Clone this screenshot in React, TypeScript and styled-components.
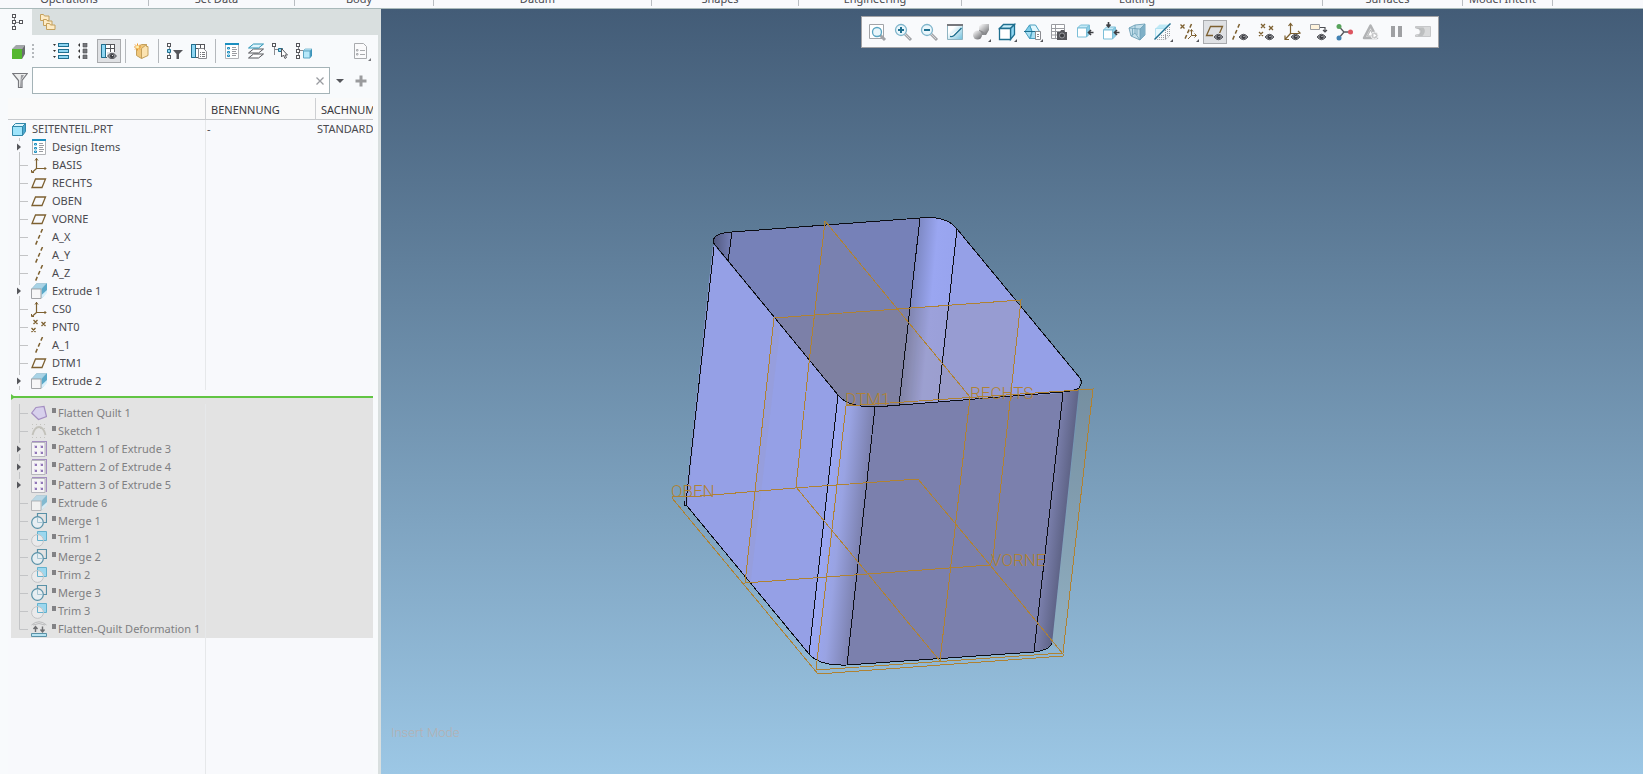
import React from "react";
import styled, { createGlobalStyle } from "styled-components";

const ink = "#4a4a4f";
const gold = "#b08232";
const brown = "#7d6030";
const teal = "#1f6f8f";
const sky = "#8fd6f2";

const GlobalStyle = createGlobalStyle`
  * { box-sizing: border-box; }
  html, body { margin: 0; height: 100%; overflow: hidden; }
  body {
    font-family: "Noto Sans", "Open Sans", sans-serif;
    font-size: 11px;
    line-height: 18px;
    color: ${ink};
    background: #f8fafc;
  }
  button, input { font: inherit; color: inherit; }
  svg { flex: none; }
`;

/* ---------- page frame ---------- */

const Page = styled.div`
  display: flex;
  flex-direction: column;
  height: 100vh;
`;

const Ribbon = styled.header`
  display: flex;
  flex: none;
  height: 9px;
  overflow: hidden;
  background: #f8f9fc;
  border-bottom: 1px solid #a9b9ba;
`;

const RibbonGroup = styled.div<{ $width: number }>`
  display: flex;
  flex: 0 0 ${(p) => p.$width}px;
  align-items: flex-end;
  justify-content: center;
  height: 6px;
  padding-right: 10px;
  border-right: 1px solid #b9bdc2;
  line-height: 14px;
  white-space: nowrap;
`;

const Workspace = styled.main`
  display: flex;
  flex: 1;
  min-height: 0;
`;

/* ---------- navigator panel ---------- */

const Navigator = styled.aside`
  display: flex;
  flex: 0 0 381px;
  flex-direction: column;
  border-right: 3px solid #d9dfdf;
  background: #f8fafc;
`;

const TabBar = styled.nav`
  display: flex;
  flex: none;
  height: 26px;
  background: #d9dfdf;
`;

const Tab = styled.button<{ $active?: boolean }>`
  display: flex;
  align-items: center;
  justify-content: center;
  width: 32px;
  padding: 0;
  border: 0;
  background: ${(p) => (p.$active ? "#f8fafc" : "transparent")};
`;

const Tools = styled.div`
  display: flex;
  flex: none;
  align-items: center;
  height: 32px;
  padding: 0 5px 0 6px;
`;

const ToolButton = styled.button<{ $pressed?: boolean }>`
  display: flex;
  flex: none;
  align-items: center;
  justify-content: center;
  width: 24px;
  height: 24px;
  padding: 0;
  border: 1px solid ${(p) => (p.$pressed ? "#a9abae" : "transparent")};
  background: ${(p) => (p.$pressed ? "#dfe1e4" : "transparent")};
`;

const Divider = styled.span`
  width: 1px;
  height: 24px;
  margin: 0 4px;
  background: #b4b8bc;
`;

const Grip = styled.span`
  width: 2px;
  height: 14px;
  margin: 0 15px 0 2px;
  background: repeating-linear-gradient(#b4b8bc 0 2px, transparent 2px 4px);
`;

const Spacer = styled.span`
  flex: 1;
`;

const FilterRow = styled.form`
  display: flex;
  flex: none;
  align-items: center;
  height: 27px;
  padding-left: 8px;
`;

const FilterBox = styled.label`
  display: flex;
  align-items: center;
  width: 298px;
  height: 27px;
  border: 1px solid #a4b3b7;
  background: #fff;
`;

const FilterInput = styled.input`
  flex: 1;
  min-width: 0;
  height: 24px;
  padding: 0 6px;
  border: 0;
  outline: 0;
  background: transparent;
`;

const SmallButton = styled.button<{ $width: number }>`
  display: flex;
  align-items: center;
  justify-content: center;
  width: ${(p) => p.$width}px;
  height: 24px;
  padding: 0;
  border: 0;
  background: transparent;
`;

const TreeArea = styled.section`
  flex: 1;
  min-height: 0;
  margin: 4px 5px 0 8px;
  overflow: hidden;
`;

const TreeTable = styled.table`
  width: 100%;
  height: 100%;
  table-layout: fixed;
  border-collapse: separate;
  border-spacing: 0;
  background: #f8f9fc;
`;

const HeadCell = styled.th<{ $width?: number }>`
  width: ${(p) => (p.$width ? `${p.$width}px` : "auto")};
  height: 22px;
  padding: 3px 0 0 5px;
  overflow: hidden;
  border-right: 1px solid #cdcfd2;
  border-bottom: 1px solid #c6c9cc;
  background: #fafafa;
  font-weight: 400;
  color: #38383c;
  text-align: left;
  white-space: nowrap;
  &:last-child { border-right: 0; }
`;

const Cell = styled.td<{ $shade?: "edge" | "full" }>`
  height: 18px;
  padding: 0 0 0 1px;
  overflow: hidden;
  white-space: nowrap;
  &:first-child { padding: 0; border-right: 1px solid #e6e8ea; }
  background: ${(p) =>
    p.$shade === "edge"
      ? "linear-gradient(to right, transparent 3px, #e3e3e3 3px)"
      : p.$shade === "full"
        ? "#e3e3e3"
        : "transparent"};
`;

const InsertCell = styled.td`
  height: 14px;
  padding: 0;
`;

const InsertBar = styled.div`
  display: flex;
  height: 14px;
  padding: 6px 0 0 3px;
`;

const InsertLine = styled.div`
  flex: 1;
  border-top: 2px solid #62c544;
  background: #e3e3e3;
`;

const InsertHandle = styled.svg`
  display: block;
  margin: -2px -4px 0 0;
  position: relative;
`;

const FillerCell = styled.td`
  padding: 0;
  &:first-child { border-right: 1px solid #e6e8ea; }
`;

const Node = styled.div<{ $muted?: boolean }>`
  display: flex;
  align-items: center;
  height: 18px;
  color: ${(p) => (p.$muted ? "#7f7f82" : ink)};
`;

const NodeIcon = styled.span<{ $muted?: boolean; $gap: number }>`
  display: flex;
  flex: none;
  margin-right: ${(p) => p.$gap}px;
  opacity: ${(p) => (p.$muted ? 0.7 : 1)};
`;

const SuppressedMark = styled.i`
  flex: none;
  align-self: flex-start;
  width: 4px;
  height: 5px;
  margin: 4px 2px 0 0;
  background: #828285;
`;

const RootNode = styled(Node)`
  padding-left: 4px;
`;

/* ---------- graphics area ---------- */

const Viewport = styled.section`
  position: relative;
  flex: 1;
  min-width: 0;
  background: linear-gradient(#435c77, #9cc7e5);
`;

const Scene = styled.svg`
  display: block;
  width: 100%;
  height: 100%;
`;

const ViewToolbar = styled.div`
  position: absolute;
  top: 7px;
  left: 480px;
  display: flex;
  gap: 2px;
  align-items: center;
  height: 32px;
  padding: 0 3px;
  border: 1px solid #a3a3a6;
  background: #f9fafc;
`;

const ModeLabel = styled.output`
  position: absolute;
  bottom: 32px;
  left: 10px;
  font-family: Roboto, sans-serif;
  font-size: 13px;
  font-weight: 300;
  line-height: 18px;
  color: #b5b0b0;
`;

/* ---------- icons ---------- */

type IconProps = { children: React.ReactNode; size?: number };

const Icon = ({ children, size = 16 }: IconProps) => (
  <svg width={size} height={size} viewBox={`0 0 ${size} ${size}`} fill="none" aria-hidden="true">
    {children}
  </svg>
);

const Eye = ({ x, y }: { x: number; y: number }) => (
  <g>
    <path d={`M${x} ${y + 3}q4.500-5.500 9 0q-4.500 5.500-9 0z`} fill="#8d8f94" stroke="#55565b" />
    <circle cx={x + 4.5} cy={y + 3} r="2" fill="#3a3b40" />
    <circle cx={x + 5} cy={y + 2.5} r=".6" fill="#fff" />
  </g>
);

const Corner = () => <path d="M20 17v3h-3z" fill="#55565b" />;

const Squares = ({ pts }: { pts: number[][] }) => (
  <>
    {pts.map(([x, y]) => (
      <rect key={`${x}-${y}`} x={x + 0.5} y={y + 0.5} width="3" height="3" fill="#fff" stroke="#55565b" />
    ))}
  </>
);

const TreeTabIcon = () => (
  <Icon>
    <path d="M6.500 2v12M7 8.500h5" stroke="#8a8b90" />
    <Squares pts={[[4, 0], [4, 6], [4, 12], [11, 6]]} />
  </Icon>
);

const FoldersIcon = () => (
  <Icon>
    {[[0, 0], [3, 5], [6, 9]].map(([x, y]) => (
      <path key={x} d={`M${x + 0.5} ${y + 0.5}h3l1 1.500h4.500v4.500h-8.500z`} fill="#fdebc6" stroke="#c4a05c" />
    ))}
  </Icon>
);

const GreenCubeIcon = () => (
  <Icon>
    <path d="M2 6l4-4h9l-3 4z" fill="#a3a6a9" />
    <path d="M12 6l3-4v9l-3 5z" fill="#6a6d70" />
    <path d="M2 6h10v10H2z" fill="#55b82f" />
  </Icon>
);

const ExpandIcon = () => (
  <Icon>
    <path d="M0 1h3l-1.500 2zM0 7h3l-1.500 2zM0 13h3l-1.500 2z" fill="#333" />
    {[0.5, 6.5, 12.5].map((y) => (
      <rect key={y} x="5.500" y={y} width="10" height="3" fill={sky} stroke={teal} />
    ))}
  </Icon>
);

const CollapseIcon = () => (
  <Icon>
    <path d="M3 0v4L1 2zM3 6v4L1 8zM3 12v4L1 14z" fill="#333" />
    <path d="M6 0h4v4H6zM6 6h4v4H6zM6 12h4v4H6z" fill="#77787d" stroke="#4c4d52" strokeWidth=".6" />
  </Icon>
);

const ColumnsBase = () => (
  <>
    <path d="M.5 1.500h13v13H.5z" fill="#fff" stroke="#55565b" />
    <path d="M9.500 1v13M5 5.500h9M1 1.500h13" stroke="#55565b" />
    <path d="M.5 1.500h4v13h-4z" fill={sky} stroke={teal} />
  </>
);

const ColumnsEyeIcon = () => (
  <Icon>
    <ColumnsBase />
    <path d="M6 9h10v7H6z" fill="#dfe1e4" />
    <Eye x={6.5} y={10} />
  </Icon>
);

const ColumnsPageIcon = () => (
  <Icon>
    <ColumnsBase />
    <path d="M7.500 5.500h5l3 3v7h-8z" fill="#fff" stroke="#8a8b90" />
    <path d="M9 9.500h1m1 0h3M9 11.500h1m1 0h3M9 13.500h1m1 0h3" stroke="#77787d" />
  </Icon>
);

const NewFolderIcon = () => (
  <Icon>
    <path d="M2.500 5.500l5-4h5v10l-5 4-5-3z" fill="#efc77c" stroke="#c4a05c" />
    <path d="M7.500 5.500l5-4v2h1.500v9l-6.500 3z" fill="#fbe3b1" stroke="#c4a05c" />
    <path d="M3.500.5v7M0 4h7M1 1.500l5 5M6 1.500l-5 5" stroke="#f09a2a" />
    <circle cx="3.500" cy="4" r="1.500" fill="#fff3b0" />
  </Icon>
);

const TreeFilterIcon = () => (
  <Icon>
    <path d="M2.500 3v11" stroke="#8a8b90" />
    <Squares pts={[[0, 0], [0, 12]]} />
    <path d="M.5 6.500h3v3h-3z" fill={sky} stroke={teal} />
    <path d="M6 7h10l-4 4V16h-2.500v-5z" fill="#55565b" />
  </Icon>
);

const ListPageIcon = () => (
  <Icon>
    <path d="M1.500 1.500h13v14h-13z" fill="#fff" stroke="#b1b3b7" />
    <path d="M1 1h14" stroke="#1b8fc0" strokeWidth="2" />
    <path d="M3.500 4.500h2v1.500h-2zM3.500 8.500h2v1.500h-2zM3.500 12h2v1.500h-2z" stroke="#1b8fc0" />
    <path d="M8 4.500h4M8 6.500h5M8 8.500h4M8 10.500h5M8 12.500h4" stroke="#9a9ca1" />
  </Icon>
);

const LayersIcon = () => (
  <Icon>
    <path d="M.5 15l5-4h10l-5 4z" fill="#fff" stroke="#55565b" />
    <path d="M.5 10l5-4h10l-5 4z" fill="#fff" stroke="#55565b" />
    <path d="M.5 5l5-4h10l-5 4z" fill="#e2f6fd" stroke="#2a93b5" />
  </Icon>
);

const TreeCursorIcon = () => (
  <Icon>
    <path d="M2.500 4v8M3 6.500h4" stroke="#8a8b90" />
    <Squares pts={[[0, 0]]} />
    <path d="M6.500 5.500h4v3h-4z" fill={sky} stroke={teal} />
    <path d="M9.500 5.500v8.500l2-2 1.500 3.500 1.500-1-1.500-2.500h2.500z" fill="#fff" stroke="#55565b" />
  </Icon>
);

const TreeBoxIcon = () => (
  <Icon>
    <path d="M2.500 3v11M4 7.500h3" stroke="#8a8b90" />
    <Squares pts={[[0, 0], [0, 6], [0, 12]]} />
    <path d="M7 8l2-2h7l-2 2z" fill="#c9eefa" stroke="#5ba6c4" strokeWidth=".7" />
    <path d="M14 8l2-2v7l-2 2z" fill="#3a93ba" />
    <path d="M7.500 8h6.500v7H7.500z" fill="#b6e8fa" stroke="#5ba6c4" />
  </Icon>
);

const SheetIcon = () => (
  <Icon size={20}>
    <path d="M3.500 2.500h9l3 3v12h-12z" fill="#fbfbfc" stroke="#a9abae" />
    <path d="M5.500 8.500h1.500v1.500h-1.500zM5.500 12.500h1.500v1.500h-1.500z" stroke="#a9abae" />
    <path d="M9 9.500h5M9 13.500h5" stroke="#a9abae" />
    <path d="M20 17v3h-3z" fill="#77787d" />
  </Icon>
);

const FunnelIcon = () => (
  <Icon>
    <path d="M.7.500h14.600L10 7.500v7H6.500v-7z" fill="#eceded" stroke="#77787d" strokeWidth="1.200" />
    <path d="M9 2h3L9.500 6.500V14H8z" fill="#9a9ca1" />
  </Icon>
);

/* model tree icons */

const PartIcon = () => (
  <Icon size={14}>
    <path d="M.5 4.500l3-3h10l-3 3z" fill="#d9f5fd" stroke="#3388aa" />
    <path d="M10.500 4.500l3-3v8l-3 4z" fill="#4aa7cf" stroke="#3388aa" />
    <path d="M.5 4.500h10v9H.5z" fill="#9fe4fb" stroke="#3388aa" />
  </Icon>
);

const CsysIcon = () => (
  <Icon>
    <path d="M5.500 1v10.500H15M5.500 11.500L1 15.500" stroke={brown} strokeWidth="1.200" />
    <path d="M4 3.500l1.500-2 1.500 2M13.500 10l1.500 1.500-1.500 1.500M.5 13v2.500H3" stroke={brown} />
  </Icon>
);

const PlaneIcon = () => (
  <Icon>
    <path d="M4.500 4h10l-3.500 8.500H1z" stroke={brown} strokeWidth="1.300" />
  </Icon>
);

const AxisIcon = () => (
  <Icon>
    <path d="M11.500 0L4.500 16" stroke={brown} strokeWidth="1.500" strokeDasharray="4 2.500" />
  </Icon>
);

const crosses = (pts: number[][]) =>
  pts.map(([x, y]) => `M${x} ${y}l4 4M${x + 4} ${y}l-4 4`).join("");

const PointIcon = () => (
  <Icon>
    <path d={crosses([[2.5, 1], [10.5, 3], [0.5, 9]])} stroke={brown} strokeWidth="1.300" />
  </Icon>
);

const ExtrudeIcon = () => (
  <Icon>
    <path d="M.5 6l5-5.500h10L10.500 6z" fill="#a9d3e6" stroke="#8fb9cb" strokeWidth=".6" />
    <path d="M10.500 6l5.500-6v9l-5.500 6.500z" fill="#5ba9c9" />
    <path d="M10.500 12l5.500-5v3l-5.500 5.500z" fill="#d6effa" />
    <path d="M.5 6h9.500v9.500H.5z" fill="#f7f7f8" stroke="#a2a4a8" />
  </Icon>
);

const FlattenQuiltIcon = () => (
  <Icon>
    <path d="M5 2.500l8-1 2.500 10-8 3L.7 8z" fill="#d3c9f0" stroke="#8a6bb4" strokeWidth="1.200" />
  </Icon>
);

const SketchIcon = () => (
  <Icon>
    <path d="M1 1.500h14M1 5.500h14M1 14.500h14" stroke="#b7b7b0" strokeDasharray="1 3" />
    <path d="M1.500 12q2-8 6.500-8t6.500 8" stroke="#b5b4a9" strokeWidth="1.800" />
  </Icon>
);

const PatternIcon = () => (
  <Icon>
    <path d="M.5 1.500h13.500v14H.5z" fill="#fdfcfe" stroke="#a5a5ad" />
    <path d="M1 .5h14.500V15" stroke="#8a6bb4" strokeWidth="1.200" />
    <path d="M3 4h3v3H3zM9 4h3v3H9zM3 10h3v3H3zM9 10h3v3H9z" fill="#d8ccea" />
    <path d="M4 5h2v2H4zM10 5h2v2h-2zM4 11h2v2H4zM10 11h2v2h-2z" fill="#6f4aa6" />
  </Icon>
);

const MergeIcon = () => (
  <Icon>
    <path d="M6.500.5h9v9h-9z" stroke={teal} strokeWidth="1.200" />
    <circle cx="6.500" cy="9.500" r="5.800" fill="#e9f4f9" stroke={teal} strokeWidth="1.200" />
    <path d="M6.500 4v5.500H12" stroke="#8fb9cb" />
  </Icon>
);

const TrimIcon = () => (
  <Icon>
    <path d="M6.500.5h9v9h-9z" fill="#7fd3f3" stroke="#2f9cc4" />
    <circle cx="6.500" cy="9.500" r="5.900" fill="#eeeeef" stroke="#b5b7ba" />
    <path d="M6.500 4v5.500H12" stroke="#2f9cc4" />
  </Icon>
);

const DeformIcon = () => (
  <Icon>
    <path d="M.5 4q7.500-6.500 15 0M2 4q6-3 12 0" stroke="#a9aaac" />
    <path d="M4.500 11V6M2.500 8l2-2.500 2 2.500M11.500 5.500v5M9.500 8.500l2 2.500 2-2.500" stroke="#3d3e42" strokeWidth="1.400" />
    <path d="M.5 12.500h15v3H.5z" fill="#a6e4f7" stroke={teal} />
  </Icon>
);

/* view toolbar icons */

const Lens = ({ sign }: { sign: string }) => (
  <>
    <path d="M12 12l6 6" stroke="#a2a4a8" strokeWidth="3" />
    <path d="M12 12l5 5" stroke="#d6d7d9" />
    <circle cx="8" cy="8" r="5.500" fill="#eaf6fb" stroke="#7fb5cb" strokeWidth="1.300" />
    <path d={sign} stroke={teal} strokeWidth="2" />
  </>
);

const RefitIcon = () => (
  <Icon size={20}>
    <path d="M2.500 2.500h14v14h-14z" fill="#fff" stroke="#a2a4a8" />
    <path d="M13 13l5 5" stroke="#a2a4a8" strokeWidth="3" />
    <circle cx="10" cy="10" r="4.500" fill="#eaf6fb" stroke="#5aa5c2" strokeWidth="1.300" />
  </Icon>
);
const ZoomInIcon = () => <Icon size={20}><Lens sign="M5 8h6M8 5v6" /></Icon>;
const ZoomOutIcon = () => <Icon size={20}><Lens sign="M5 8h6" /></Icon>;

const RepaintIcon = () => (
  <Icon size={20}>
    <defs>
      <linearGradient id="repaint" x1="0" y1="0" x2="1" y2="1">
        <stop offset=".3" stopColor="#fff" />
        <stop offset="1" stopColor="#6fbfdc" />
      </linearGradient>
    </defs>
    <path d="M2.500 2.500h15v15h-15z" fill="url(#repaint)" stroke="#8fb4c2" />
    <path d="M2 3h16" stroke="#77787d" strokeWidth="2" />
    <path d="M16.500 5.500L8 14l-4 2.500 2.500-4z" fill="#fff" />
    <path d="M16.500 6L9 13.500q-2 1.500-4 1" stroke={teal} strokeWidth="1.400" />
  </Icon>
);

const ShadeIcon = () => (
  <Icon size={20}>
    <defs>
      <linearGradient id="shade" x1="0" y1="0" x2=".8" y2="1">
        <stop offset=".1" stopColor="#f4f4f5" />
        <stop offset="1" stopColor="#707174" />
      </linearGradient>
    </defs>
    <path d="M8 4l3-2h7v6l-3 5H8z" fill="url(#shade)" />
    <path d="M8 8q5 1 7 5h-7z" fill="#8b8c8f" />
    <circle cx="6.500" cy="13" r="4.500" fill="url(#shade)" />
    <Corner />
  </Icon>
);

const BoxStyleIcon = () => (
  <Icon size={20}>
    <path d="M2.500 6.500l4-4h11l-4 4z" fill="#c9eefa" stroke={teal} strokeWidth="1.300" />
    <path d="M13.500 6.500l4-4v10l-4 5z" fill={sky} stroke={teal} strokeWidth="1.300" />
    <path d="M2.500 6.500h11v11h-11z" fill="#fff" stroke={teal} strokeWidth="1.300" />
    <Corner />
  </Icon>
);

const SavedViewIcon = () => (
  <Icon size={20}>
    <path d="M6.500 3h6l4 6.500H9z" fill="#e2f7fd" stroke="#4aa0c0" />
    <path d="M2 9.500L6.500 3 9 9.500z" fill="#7fcdea" stroke="#4aa0c0" />
    <path d="M2 9.500h7l-1.500 7h-1zM9 9.500h7.500l-4 7h-6z" fill="#a9e0f4" stroke="#4aa0c0" />
    <path d="M1 9.500h16" stroke={teal} />
    <path d="M12.500 9.500h5v8h-5z" fill="#fff" stroke="#8a8b90" />
    <path d="M14 12.500h2M14 14.500h2" stroke="#8a8b90" />
    <Corner />
  </Icon>
);

const CameraIcon = () => (
  <Icon size={20}>
    <path d="M2.500 2.500h13v14h-13zM6.500 2v14M2 6.500h13M2 9.500h13M2 13h13" fill="#fff" stroke="#9a9ca1" />
    <path d="M8 10h3l1-2h3l1 2h2v8H8z" fill="#55565b" />
    <circle cx="13" cy="13.500" r="2.500" fill="#3d3e42" stroke="#9a9ca1" />
  </Icon>
);

const PaleBox = ({ y }: { y: number }) => (
  <g>
    <path d={`M2.500 ${y + 3}l3-3h9l-3 3z`} fill="#c5eaf7" stroke="#7cbfd8" />
    <path d={`M11.500 ${y + 3}l3-3v9l-3 3z`} fill="#8ccde6" stroke="#7cbfd8" />
    <path d={`M2.500 ${y + 3}h9v9h-9z`} fill="#fff" stroke="#7cbfd8" />
  </g>
);

const ViewNormalIcon = () => (
  <Icon size={20}>
    <PaleBox y={3} />
    <path d="M18.500 10.500H14M16 8l-2.500 2.500L16 13" stroke="#3d3e42" strokeWidth="1.600" />
  </Icon>
);

const ViewOrientIcon = () => (
  <Icon size={20}>
    <PaleBox y={5} />
    <path d="M18.500 10.500H14M16 8l-2.500 2.500L16 13M7.500 0v4.500M5.500 2.500l2 2.500 2-2.500" stroke="#3d3e42" strokeWidth="1.600" />
  </Icon>
);

const PerspectiveIcon = () => (
  <Icon size={20}>
    <path d="M2 6l6-3 10-1v11l-5 5-9-4z" fill="#c4dfeb" stroke="#7aa9be" />
    <path d="M13 7l5-5v11l-5 5z" fill="#7fb0c7" />
    <path d="M2 6l11 1 5-5M13 7v11M8 3v8l5 7M8 11l-4 3M5.500 6.500v7M10 7v6" stroke="#6a9fb6" strokeWidth=".8" />
  </Icon>
);

const SectionIcon = () => (
  <Icon size={20}>
    <path d="M2.500 6.500l4-4h10L12 7z" fill="#bfe9f6" />
    <path d="M2.500 6.500h9.500L2.500 17z" fill="#e8f8fd" stroke="#a5dcef" strokeWidth=".8" />
    <path d="M16.500 5v9l-4 3.500H4M12.500 8v9M8 13.500h5M6 15.500h7M14.500 7v8" stroke="#9a9ca1" strokeDasharray="1 1" />
    <path d="M17.500 1.500l-16 16" stroke={teal} strokeWidth="1.500" />
    <Corner />
  </Icon>
);

const DatumFiltersIcon = () => (
  <Icon size={20}>
    <path d={crosses([[1.5, 2.5]])} stroke={brown} strokeWidth="1.300" />
    <path d="M12.500 2l-7 16" stroke={brown} strokeWidth="1.500" strokeDasharray="4 2" />
    <path d="M12.500 8v5.500H17M12.500 13.500L9 17M11 9.500l1.500-2 1.500 2M15.500 11.500l2 2-2 2" stroke={brown} />
    <Corner />
  </Icon>
);

const PlaneEyeIcon = () => (
  <Icon size={20}>
    <path d="M5.500 4.500h12l-4 9H1.500z" stroke={brown} strokeWidth="1.300" />
    <path d="M8 11h11v7H8z" fill="#dfe1e4" />
    <Eye x={9} y={12} />
  </Icon>
);

const AxisEyeIcon = () => (
  <Icon size={20}>
    <path d="M8.500 2l-7 16" stroke={brown} strokeWidth="1.500" strokeDasharray="4 2.500" />
    <Eye x={8} y={12} />
  </Icon>
);

const PointEyeIcon = () => (
  <Icon size={20}>
    <path d={crosses([[4, 2], [12, 4], [2, 10]])} stroke={brown} strokeWidth="1.300" />
    <Eye x={8} y={12} />
  </Icon>
);

const CsysEyeIcon = () => (
  <Icon size={20}>
    <path d="M7.500 2v9.500h9M7.500 11.500L2.500 17M5.500 4l2-2.500 2 2.500M15 9l2.500 2.500M2 13.500v4h4" stroke={brown} strokeWidth="1.200" />
    <Eye x={8} y={12} />
  </Icon>
);

const NoteEyeIcon = () => (
  <Icon size={20}>
    <path d="M1.500 2.500h9v5h-9z" fill="#fff3dc" stroke="#9a9ca1" />
    <path d="M11 5.500h5v4M14 8l2 2 2-2" stroke="#4c4d52" strokeWidth="1.200" />
    <Eye x={8} y={12} />
  </Icon>
);

const NetworkIcon = () => (
  <Icon size={20}>
    <path d="M4 4.500l5 5.500-5 6M9 10h7" stroke="#55565b" strokeWidth="1.300" />
    <circle cx="4" cy="4.500" r="2.500" fill="#58a35c" />
    <circle cx="4" cy="16" r="2.500" fill="#4382b3" />
    <circle cx="15.500" cy="10" r="2.500" fill="#dd5560" />
  </Icon>
);

const SimulateIcon = () => (
  <Icon size={20}>
    <path d="M9.500 3.500L16 16H3z" fill="#e4e4e5" stroke="#b2b3b5" strokeWidth="2.500" strokeLinejoin="round" />
    <path d="M9.500 8l3 6h-6z" fill="#fff" stroke="#b2b3b5" />
    <circle cx="13.500" cy="13.500" r="3.500" fill="#c4c5c7" stroke="#f1f1f2" />
    <path d="M12.500 11.500l3 2-3 2z" fill="#fff" />
  </Icon>
);

const PauseIcon = () => (
  <Icon size={20}>
    <path d="M4 4h4v11H4zM11 4h4v11h-4z" fill="#9fa0a3" />
  </Icon>
);

const ShapeIcon = () => (
  <Icon size={20}>
    <path d="M2.500 4.500h15v10h-15v-1.500q6-.5 6-3.500t-6-3.500z" fill="#d8d9da" stroke="#c6c7c9" />
    <path d="M2.500 5.500h8q3 4-1 8.500h-5q6-5-2-8.500z" fill="#b2b3b5" opacity=".7" />
  </Icon>
);

/* ---------- data ---------- */

const ribbonGroups: [string, number][] = [
  ["Operations", 149], ["Set Data", 146], ["Body", 139], ["Datum", 218], ["Shapes", 147],
  ["Engineering", 163], ["Editing", 361], ["Surfaces", 140], ["Model Intent", 90],
];

type Item = { label: string; icon: React.ComponentType; expandable?: boolean };

const activeItems: Item[] = [
  { label: "Design Items", icon: ListPageIcon, expandable: true },
  { label: "BASIS", icon: CsysIcon },
  { label: "RECHTS", icon: PlaneIcon },
  { label: "OBEN", icon: PlaneIcon },
  { label: "VORNE", icon: PlaneIcon },
  { label: "A_X", icon: AxisIcon },
  { label: "A_Y", icon: AxisIcon },
  { label: "A_Z", icon: AxisIcon },
  { label: "Extrude 1", icon: ExtrudeIcon, expandable: true },
  { label: "CS0", icon: CsysIcon },
  { label: "PNT0", icon: PointIcon },
  { label: "A_1", icon: AxisIcon },
  { label: "DTM1", icon: PlaneIcon },
  { label: "Extrude 2", icon: ExtrudeIcon, expandable: true },
];

const suppressedItems: Item[] = [
  { label: "Flatten Quilt 1", icon: FlattenQuiltIcon },
  { label: "Sketch 1", icon: SketchIcon },
  { label: "Pattern 1 of Extrude 3", icon: PatternIcon, expandable: true },
  { label: "Pattern 2 of Extrude 4", icon: PatternIcon, expandable: true },
  { label: "Pattern 3 of Extrude 5", icon: PatternIcon, expandable: true },
  { label: "Extrude 6", icon: ExtrudeIcon },
  { label: "Merge 1", icon: MergeIcon },
  { label: "Trim 1", icon: TrimIcon },
  { label: "Merge 2", icon: MergeIcon },
  { label: "Trim 2", icon: TrimIcon },
  { label: "Merge 3", icon: MergeIcon },
  { label: "Trim 3", icon: TrimIcon },
  { label: "Flatten-Quilt Deformation 1", icon: DeformIcon },
];

const viewTools: [string, React.ComponentType][] = [
  ["Refit", RefitIcon], ["Zoom In", ZoomInIcon], ["Zoom Out", ZoomOutIcon], ["Repaint", RepaintIcon],
  ["Rendering Options", ShadeIcon], ["Display Style", BoxStyleIcon], ["Saved Orientations", SavedViewIcon],
  ["View Manager", CameraIcon], ["View Normal", ViewNormalIcon], ["Reorient", ViewOrientIcon],
  ["Perspective", PerspectiveIcon], ["Section", SectionIcon], ["Datum Display Filters", DatumFiltersIcon],
  ["Plane Display", PlaneEyeIcon], ["Axis Display", AxisEyeIcon], ["Point Display", PointEyeIcon],
  ["Csys Display", CsysEyeIcon], ["Annotation Display", NoteEyeIcon], ["Spin Center", NetworkIcon],
  ["Simulate", SimulateIcon], ["Pause", PauseIcon], ["Surface Analysis", ShapeIcon],
];

/* ---------- tree ---------- */

const Branch = ({ expandable, last }: { expandable?: boolean; last?: boolean }) => (
  <svg width="23" height="18" viewBox="0 0 23 18" aria-hidden="true">
    <path
      d={expandable ? "M11.500 0v3M11.500 14v4" : last ? "M11.500 0v9.500H20" : "M11.500 0v18M11.500 9.500H20"}
      stroke="#c3c4c6"
      fill="none"
    />
    {expandable && <path d="M9 5.500v7l4-3.500z" fill="#55565b" />}
  </svg>
);

const TreeRow = ({ item, muted, last }: { item: Item; muted?: boolean; last?: boolean }) => {
  const Glyph = item.icon;
  return (
    <tr>
      <Cell $shade={muted ? "edge" : undefined}>
        <Node $muted={muted}>
          <Branch expandable={item.expandable} last={last} />
          <NodeIcon $muted={muted} $gap={5}><Glyph /></NodeIcon>
          {muted && <SuppressedMark />}
          {item.label}
        </Node>
      </Cell>
      <Cell $shade={muted ? "full" : undefined} />
      <Cell $shade={muted ? "full" : undefined} />
    </tr>
  );
};

const ModelTree = () => (
  <TreeArea>
    <TreeTable aria-label="Model tree">
      <thead>
        <tr>
          <HeadCell $width={198} aria-label="Feature" />
          <HeadCell $width={110}>BENENNUNG</HeadCell>
          <HeadCell>SACHNUMMER</HeadCell>
        </tr>
      </thead>
      <tbody>
        <tr>
          <Cell>
            <RootNode>
              <NodeIcon $gap={6}><PartIcon /></NodeIcon>
              SEITENTEIL.PRT
            </RootNode>
          </Cell>
          <Cell>-</Cell>
          <Cell>STANDARD_</Cell>
        </tr>
        {activeItems.map((item) => <TreeRow key={item.label} item={item} />)}
        <tr>
          <InsertCell colSpan={3}>
            <InsertBar>
              <InsertHandle width="4" height="6" viewBox="0 0 4 6" aria-hidden="true">
                <path d="M0 0l4 3-4 3z" fill="#62c544" />
              </InsertHandle>
              <InsertLine />
            </InsertBar>
          </InsertCell>
        </tr>
        {suppressedItems.map((item, i) => (
          <TreeRow key={item.label} item={item} muted last={i === suppressedItems.length - 1} />
        ))}
        <tr>
          <FillerCell />
          <FillerCell />
          <FillerCell />
        </tr>
      </tbody>
    </TreeTable>
  </TreeArea>
);

const Tool = ({ label, pressed, children }: { label: string; pressed?: boolean; children: React.ReactNode }) => (
  <ToolButton type="button" aria-label={label} aria-pressed={pressed} $pressed={pressed}>
    {children}
  </ToolButton>
);

/* ---------- model drawing ---------- */

const Model = () => (
  <Scene viewBox="381 9 1262 765" role="img" aria-label="Rounded box surface with datum planes">
    <defs>
      <linearGradient id="backLeft" x1="713" y1="0" x2="732" y2="0" gradientUnits="userSpaceOnUse">
        <stop offset="0" stopColor="#50577d" />
        <stop offset="1" stopColor="#7681b8" />
      </linearGradient>
      <linearGradient id="backRight" x1="907" y1="300" x2="951" y2="304" gradientUnits="userSpaceOnUse">
        <stop offset="0" stopColor="#7681b8" />
        <stop offset=".55" stopColor="#9aa6f1" />
        <stop offset="1" stopColor="#98a4ee" />
      </linearGradient>
      <linearGradient id="frontLeft" x1="824" y1="520" x2="863" y2="524" gradientUnits="userSpaceOnUse">
        <stop offset="0" stopColor="#9ba8f5" />
        <stop offset=".4" stopColor="#99a3e2" />
        <stop offset="1" stopColor="#7b80ad" />
      </linearGradient>
      <linearGradient id="frontRight" x1="1048" y1="520" x2="1067" y2="522" gradientUnits="userSpaceOnUse">
        <stop offset="0" stopColor="#7b80ad" />
        <stop offset="1" stopColor="#5b6082" />
      </linearGradient>
    </defs>

    <path d="M1080 389l13-1-30 265-11-8z" fill="#b08232" opacity=".1" />

    <path d="M731 232l189-14-21 188-24 1-147-146z" fill="#7681b8" />
    <path d="M713 243v-4q3-6 19-7l-4 30z" fill="url(#backLeft)" />
    <path d="M920 218q26-3 37 11l-19 176-39 2z" fill="url(#backRight)" />
    <path d="M957 229l123 150-1 9-16 5-125 11z" fill="#95a0e7" />
    <path d="M728 262l110 133q11 12 37 12l24-2 21-187-188 14z" fill="#7681b8" />
    <path d="M825 221l145 176-95 10q-28-2-37-12l-29-34z" fill="#b08232" opacity=".06" />
    <path d="M774 318l247-18-11 96-135 11q-28-2-37-12z" fill="#b08232" opacity=".11" />

    <path d="M713 245l-28 258 2 4 27-260z" fill="#8d97da" />
    <path d="M714 245l124 150-29 259L687 506z" fill="#95a0e6" />
    <path d="M774 322l6 8-30 258-5-6z" fill="#b08232" opacity=".05" />
    <path d="M838 395q9 12 37 12l-28 258q-28 1-38-11z" fill="url(#frontLeft)" />
    <path d="M875 407l188-14-29 259-187 13z" fill="#7b80ad" />
    <path d="M1063 393l16-5-27 256q-5 6-18 8z" fill="url(#frontRight)" />

    <g fill="none" stroke="#0c0d14" strokeWidth="1" shapeRendering="crispEdges">
      <path d="M713.500 243v-4q3-6 18.500-7l188-14q26-3 37 11l123 149q3 5-1 10-4 3-16 4l-188 15q-28 0-37-12L713.500 243" />
      <path d="M714 247l-28 255 1 4 122 148q10 12 38 11l187-13q16-2 18-9M684.500 501v4l2 1" />
      <path d="M732 232l-4 30M920 218l-21 187M957 229l-19 173M838 395l-29 259M875 407l-28 258M1063 393l-29 259" />
    </g>

    <g fill="none" stroke={gold} strokeWidth="1" shapeRendering="crispEdges">
      <path d="M825 221l145 176-30 264-144-174 13-124z" />
      <path d="M774 318l247-18-28 258-3 7-245 18z" />
      <path d="M672 497l28-1 95-8 123-9 72 86 73 89v2l-245 18-146-176z" />
      <path d="M846 406l247-17-30 264-247 17z" />
    </g>

    <g fill={gold} fontFamily="Roboto, sans-serif" fontWeight="300" fontSize="17">
      <text x="845" y="405">DTM1</text>
      <text x="970" y="399">RECHTS</text>
      <text x="671" y="497">OBEN</text>
      <text x="991" y="566">VORNE</text>
    </g>
  </Scene>
);

/* ---------- app ---------- */

export default function App() {
  return (
    <Page>
      <GlobalStyle />
      <Ribbon>
        {ribbonGroups.map(([name, width]) => (
          <RibbonGroup key={name} $width={width}>{name}</RibbonGroup>
        ))}
      </Ribbon>
      <Workspace>
        <Navigator>
          <TabBar>
            <Tab type="button" aria-label="Model Tree" $active><TreeTabIcon /></Tab>
            <Tab type="button" aria-label="Folder Browser"><FoldersIcon /></Tab>
          </TabBar>
          <Tools>
            <Tool label="Bodies"><GreenCubeIcon /></Tool>
            <Grip />
            <Tool label="Expand All"><ExpandIcon /></Tool>
            <Tool label="Collapse All"><CollapseIcon /></Tool>
            <Tool label="Show Columns" pressed><ColumnsEyeIcon /></Tool>
            <Divider />
            <Tool label="New Group"><NewFolderIcon /></Tool>
            <Divider />
            <Tool label="Tree Filters"><TreeFilterIcon /></Tool>
            <Tool label="Tree Columns"><ColumnsPageIcon /></Tool>
            <Divider />
            <Tool label="Design Items"><ListPageIcon /></Tool>
            <Tool label="Layers"><LayersIcon /></Tool>
            <Tool label="Auto Locate"><TreeCursorIcon /></Tool>
            <Tool label="Highlight Geometry"><TreeBoxIcon /></Tool>
            <Spacer />
            <Tool label="Settings"><SheetIcon /></Tool>
          </Tools>
          <FilterRow>
            <SmallButton type="button" aria-label="Filter" $width={24}><FunnelIcon /></SmallButton>
            <FilterBox>
              <FilterInput type="text" aria-label="Filter tree" />
              <SmallButton type="button" aria-label="Clear filter" $width={18}>
                <Icon size={8}><path d="M.5.5l7 7M7.500.5l-7 7" stroke="#9a9ca1" strokeWidth="1.300" /></Icon>
              </SmallButton>
            </FilterBox>
            <SmallButton type="button" aria-label="Filter options" $width={20}>
              <Icon size={8}><path d="M0 2h8L4 6z" fill="#55565b" /></Icon>
            </SmallButton>
            <SmallButton type="button" aria-label="Add filter" $width={22}>
              <Icon size={12}><path d="M6 .5v11M.5 6h11" stroke="#9a9b9d" strokeWidth="3" /></Icon>
            </SmallButton>
          </FilterRow>
          <ModelTree />
        </Navigator>
        <Viewport>
          <Model />
          <ViewToolbar role="toolbar" aria-label="Graphics toolbar">
            {viewTools.map(([label, Glyph]) => (
              <Tool key={label} label={label} pressed={label === "Plane Display" || undefined}>
                <Glyph />
              </Tool>
            ))}
          </ViewToolbar>
          <ModeLabel>Insert Mode</ModeLabel>
        </Viewport>
      </Workspace>
    </Page>
  );
}
